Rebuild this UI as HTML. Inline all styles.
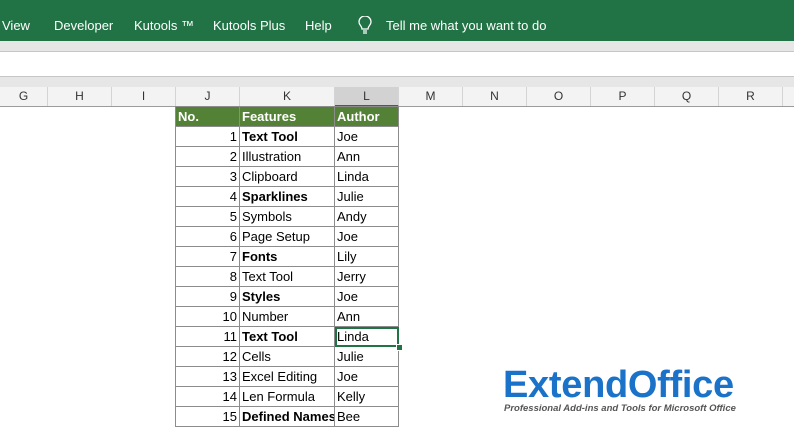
<!DOCTYPE html>
<html><head><style>
body{margin:0;width:794px;height:440px;overflow:hidden;background:#fff;font-family:"Liberation Sans",sans-serif;position:relative}
.rib{position:absolute;left:0;top:0;width:794px;height:41px;background:#217346;color:#fff;font-size:13px}
.rib span{position:absolute;top:18px}
.g1{position:absolute;top:41px;left:0;width:794px;height:10px;background:#e6e6e6;border-bottom:1px solid #c6c6c6}
.g2{position:absolute;top:76px;left:0;width:794px;height:10px;background:#e6e6e6;border-top:1px solid #c6c6c6}
.hdr{position:absolute;top:87px;left:0;width:794px;height:19px;background:#f3f3f3;border-bottom:1px solid #9b9b9b}
.hdr div{position:absolute;top:0;height:19px;border-right:1px solid #d4d4d4;text-align:center;line-height:19px;font-size:12px;color:#333}
table{position:absolute;left:175px;top:106px;border-collapse:collapse;font-size:13px}
td{border:1px solid #8c8c8c;height:18px;padding:1px 2px 0 2px;line-height:18px;white-space:nowrap;overflow:hidden}
td.n{text-align:right;width:59px}
td.f{width:90px;max-width:90px}
td.a{width:59px}
tr.h td{background:#538135;color:#fff;font-weight:bold;border-color:#8c8c8c}
b{font-weight:bold}
</style></head><body>
<div class="rib">
<span style="left:2px">View</span><span style="left:54px">Developer</span><span style="left:134px">Kutools ™</span><span style="left:213px">Kutools Plus</span><span style="left:305px">Help</span>
<svg style="position:absolute;left:358px;top:16px" width="14" height="20" viewBox="0 0 14 20"><path d="M4 13 C4 10 1 9 1 6 A6 6 0 0 1 13 6 C13 9 10 10 10 13 Z M5 15 H9 M5 17 H9" stroke="#fff" stroke-width="1.3" fill="none"/></svg>
<span style="left:386px">Tell me what you want to do</span>
</div>
<div class="g1"></div><div class="g2"></div>
<div class="hdr">
<div style="left:0;width:47px;">G</div><div style="left:48px;width:63px">H</div><div style="left:112px;width:63px">I</div><div style="left:176px;width:63px">J</div><div style="left:240px;width:94px">K</div><div style="left:335px;width:63px;background:#d2d2d2;border-bottom:2px solid #217346;height:18px">L</div><div style="left:399px;width:63px">M</div><div style="left:463px;width:63px">N</div><div style="left:527px;width:63px">O</div><div style="left:591px;width:63px">P</div><div style="left:655px;width:63px">Q</div><div style="left:719px;width:63px">R</div>
</div>
<table>
<tr class="h"><td class="n" style="text-align:left">No.</td><td class="f">Features</td><td class="a">Author</td></tr>
<tr><td class="n">1</td><td class="f"><b>Text Tool</b></td><td class="a">Joe</td></tr>
<tr><td class="n">2</td><td class="f">Illustration</td><td class="a">Ann</td></tr>
<tr><td class="n">3</td><td class="f">Clipboard</td><td class="a">Linda</td></tr>
<tr><td class="n">4</td><td class="f"><b>Sparklines</b></td><td class="a">Julie</td></tr>
<tr><td class="n">5</td><td class="f">Symbols</td><td class="a">Andy</td></tr>
<tr><td class="n">6</td><td class="f">Page Setup</td><td class="a">Joe</td></tr>
<tr><td class="n">7</td><td class="f"><b>Fonts</b></td><td class="a">Lily</td></tr>
<tr><td class="n">8</td><td class="f">Text Tool</td><td class="a">Jerry</td></tr>
<tr><td class="n">9</td><td class="f"><b>Styles</b></td><td class="a">Joe</td></tr>
<tr><td class="n">10</td><td class="f">Number</td><td class="a">Ann</td></tr>
<tr><td class="n">11</td><td class="f"><b>Text Tool</b></td><td class="a" style="outline:2px solid #217346;outline-offset:-2px">Linda</td></tr>
<tr><td class="n">12</td><td class="f">Cells</td><td class="a">Julie</td></tr>
<tr><td class="n">13</td><td class="f">Excel Editing</td><td class="a">Joe</td></tr>
<tr><td class="n">14</td><td class="f">Len Formula</td><td class="a">Kelly</td></tr>
<tr><td class="n">15</td><td class="f"><b>Defined Names</b></td><td class="a">Bee</td></tr>
</table>
<div style="position:absolute;left:396px;top:344px;width:5px;height:5px;background:#217346;border:1px solid #fff"></div>
<div style="position:absolute;left:503px;top:365px;font-size:38px;font-weight:bold;color:#1a73c8;letter-spacing:-0.3px;line-height:40px">ExtendOffice</div>
<div style="position:absolute;left:504px;top:403px;font-size:9.5px;font-style:italic;font-weight:bold;color:#555">Professional Add-ins and Tools for Microsoft Office</div>
</body></html>
